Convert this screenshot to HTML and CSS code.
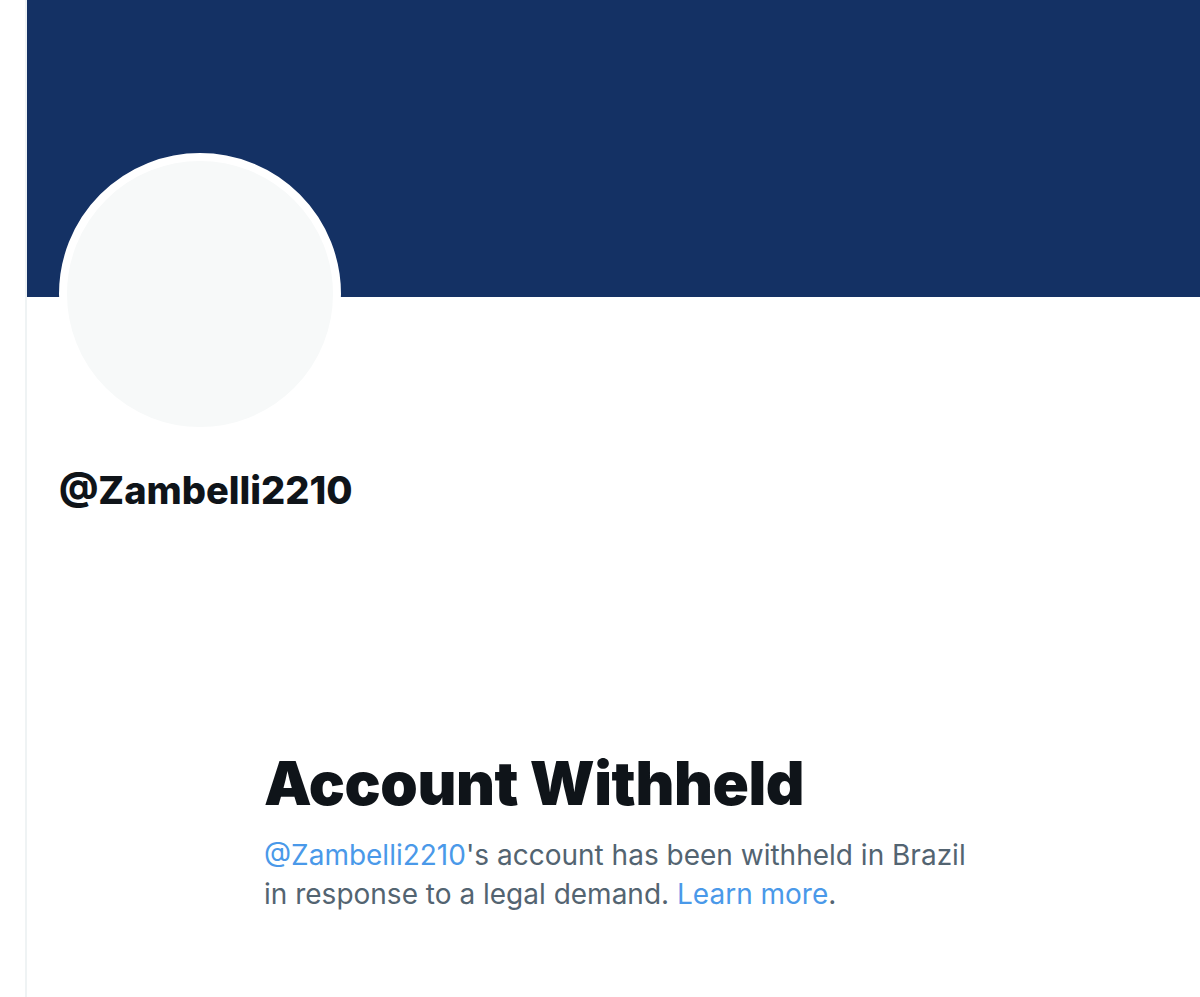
FILE: index.html
```html
<!DOCTYPE html>
<html lang="en">
<head>
  <meta charset="UTF-8">
  <meta name="viewport" content="width=device-width, initial-scale=1.0">
  <title>@Zambelli2210</title>
  <link rel="stylesheet" href="styles.css">
</head>
<body>
  <main class="profile">
    <div class="banner"></div>
    <div class="profile-head">
      <div class="avatar"></div>
      <div class="handle">@Zambelli2210</div>
    </div>
    <section class="withheld">
      <h1 class="withheld-title">Account Withheld</h1>
      <p class="withheld-text">
        <a href="#">@Zambelli2210</a>'s account has been withheld in Brazil
        in response to a legal demand. <a href="#">Learn more</a>.
      </p>
    </section>
  </main>
</body>
</html>
```

FILE: styles.css
```css
body {
  margin: 0;
  background: #fff;
  font-family: Inter, "Liberation Sans", Arial, sans-serif;
  color: #0f1419;
}

.profile {
  margin-left: 25px;
  min-height: 997px;
  border-left: 2px solid #eff3f4;
}

.banner {
  height: 297px;
  background: #143164;
}

.profile-head {
  padding-left: 32px;
}

.avatar {
  width: 266px;
  height: 266px;
  margin-top: -144px;
  border: 8px solid #fff;
  border-radius: 50%;
  background: #f7f9f9;
}

.handle {
  margin-top: 31px;
  font-size: 38px;
  line-height: 48px;
  font-weight: 800;
}

.withheld {
  padding-left: 237px;
  margin-top: 231px;
}

.withheld-title {
  margin: 0;
  font-size: 60px;
  line-height: 76px;
  font-weight: 900;
  letter-spacing: -0.4px;
}

.withheld-text {
  margin: 15px 0 0;
  max-width: 720px;
  font-size: 28px;
  line-height: 39px;
  color: #536471;
}

.withheld-text a {
  color: #4a99e9;
  text-decoration: none;
}
```
